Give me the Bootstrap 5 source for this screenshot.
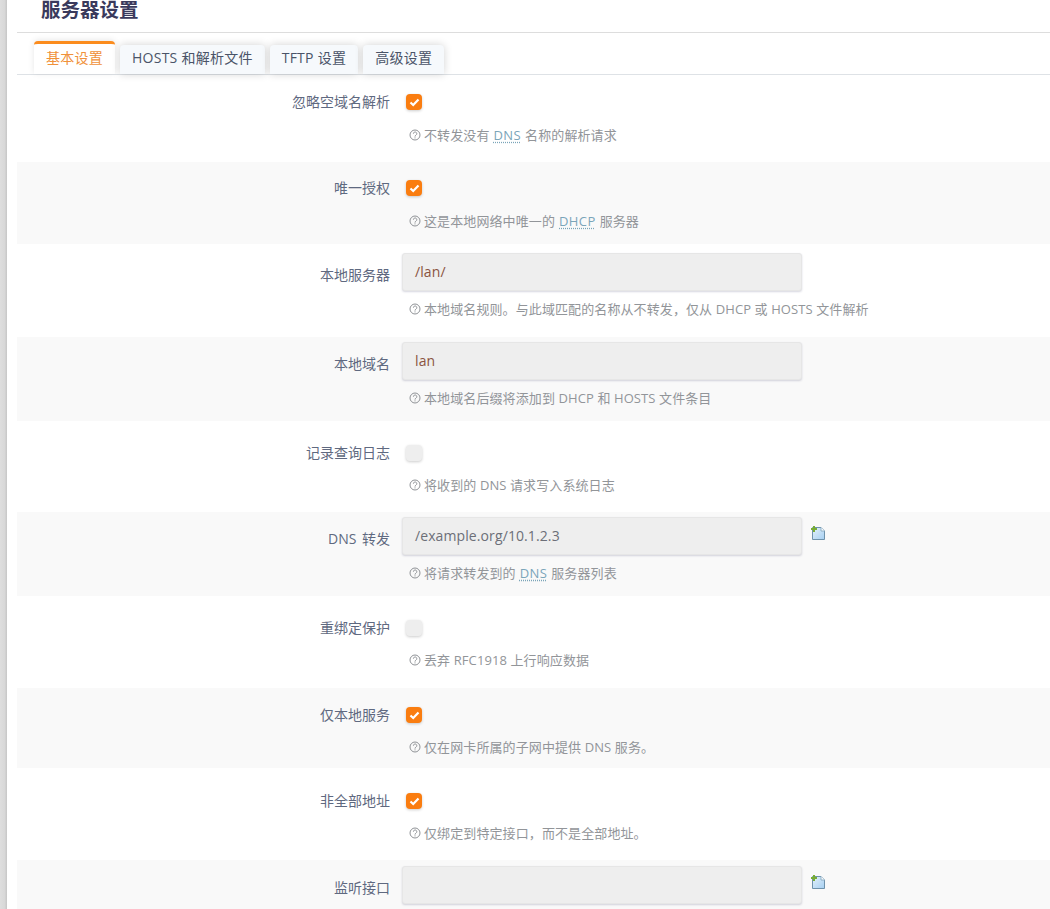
<!doctype html>
<html lang="zh"><head><meta charset="utf-8">
<link href="https://cdn.jsdelivr.net/npm/bootstrap@5.3.0/dist/css/bootstrap.min.css" rel="stylesheet">
<style>
html,body{height:909px;overflow:hidden}
body{font-family:"Open Sans","Noto Sans CJK SC",sans-serif;font-size:14px;color:#32325d;background:#fff}
.edgebar{width:7px;flex:none;background:linear-gradient(90deg,#dedede,#d8d8d8 65%,#c6c6c6)}
.mainpane{flex:1;min-width:0;padding-left:10px;height:909px;overflow:hidden}
.sec-title{font-size:19.5px;font-weight:700;line-height:18px;height:33px;margin:0;padding-left:24px;color:#3a3a5c;border-bottom:1px solid #ddd;font-family:"Noto Sans CJK SC",sans-serif}
.tabbar{height:42px;padding-left:17px;gap:5px;border-bottom:1px solid #dee2e6;align-items:flex-end}
.tabitem{height:29px;padding:0 12px;line-height:26px;font-size:14px;letter-spacing:.25px;color:#4a5468;background:#f6f9fc;border-radius:4px 4px 0 0;box-shadow:0 0 8px rgba(0,0,0,.18);white-space:nowrap}
.tabitem.on{height:33px;line-height:28px;background:#fff;color:#f0913a;border-top:3px solid #fb8c1e;box-shadow:0 -1px 6px rgba(0,0,0,.1)}
.opt.alt{background:#f9f9f9}
.optlabel{width:373px;text-align:right;flex:none;font-size:14px;line-height:16px;word-spacing:2px;color:#5f6980}
.optbody{margin-left:12px;width:400px;flex:none}
.inrow .optlabel{line-height:38px;padding-top:3px}
.cb{width:16px;height:16px;border-radius:4px;margin-left:4px;background:#eee;box-shadow:0 1px 3px rgba(0,0,0,.2);display:flex;align-items:center;justify-content:center}
.cb.checked{background:#fa7d10}
.hint{font-size:13px;letter-spacing:.1px;color:#929599;line-height:18px;white-space:nowrap;margin-left:7px;margin-top:16px;display:flex;align-items:center;gap:3px}
.hint svg{flex:none}
.inrow .hint{margin-top:9px}
.r4 .hint,.r6 .hint,.r7 .hint,.r8 .hint{margin-top:15px}
.hint abbr{color:#7ba5b9;text-decoration:underline dotted;text-underline-offset:2px;margin:0 4px;letter-spacing:.4px}
.fake-in{position:relative;width:400px;height:38px;background:#eee;border-radius:3px;box-shadow:0 1px 2px rgba(50,50,93,.2);padding:0 12px;line-height:36px;font-size:14px;letter-spacing:.1px;color:#8a5340;border:1px solid #e6e6e6}
.fake-in.gray{color:#6c6f78}
.addic{position:absolute;left:407px;top:7px;display:block}
.r0{height:87px;padding-top:19px}.r1{height:82px;padding-top:18px}.r2{height:93px;padding-top:9px}.r3{height:84px;padding-top:5px}
.r4{height:91px;padding-top:24px}.r5{height:84px;padding-top:5px}.r6{height:92px;padding-top:24px}.r7{height:80px;padding-top:19px}
.r8{height:92px;padding-top:25px}.r9{height:60px;padding-top:6px}
</style></head><body>
<svg width="0" height="0" class="position-absolute"><defs>
<symbol id="qm" viewBox="0 0 12 12"><circle cx="6" cy="6" r="5" fill="none" stroke="#8f9296"/><path d="M4.400 4.700a1.700 1.700 0 1 1 2.600 1.400c-.7.500-1 .8-1 1.500M6 8.400v1" fill="none" stroke="#8f9296"/></symbol>
<symbol id="tick" viewBox="0 0 11 9"><path d="M1.500 4.500 4.200 7 9.500 1.500" fill="none" stroke="#fff" stroke-width="2.200"/></symbol>
<linearGradient id="docfill" x1="0" y1="0" x2="1" y2="1"><stop offset="0" stop-color="#e4f1fb"/><stop offset="1" stop-color="#a6cff1"/></linearGradient>
<symbol id="addi" viewBox="0 0 16 16"><path d="M2.500 2.500h8.500l3.500 3.500v8.500h-12z" fill="url(#docfill)" stroke="#6f92ab"/><path d="M11 2.500v3.500h3.500" fill="#fff" stroke="#8fb0c6"/><path d="M4 1v6M1 4h6" stroke="#79ad36" stroke-width="2"/></symbol>
</defs></svg>
<div class="d-flex">
<div class="edgebar"></div>
<div class="mainpane">
<h3 class="sec-title">服务器设置</h3>
<div class="tabbar d-flex">
 <div class="tabitem on">基本设置</div><div class="tabitem">HOSTS 和解析文件</div><div class="tabitem">TFTP 设置</div><div class="tabitem">高级设置</div>
</div>
<div class="opt r0 d-flex"><div class="optlabel">忽略空域名解析</div><div class="optbody"><div class="cb checked"><svg width="11" height="9"><use href="#tick"/></svg></div><div class="hint"><svg width="12" height="12"><use href="#qm"/></svg><span>不转发没有<abbr>DNS</abbr>名称的解析请求</span></div></div></div>
<div class="opt alt r1 d-flex"><div class="optlabel">唯一授权</div><div class="optbody"><div class="cb checked"><svg width="11" height="9"><use href="#tick"/></svg></div><div class="hint"><svg width="12" height="12"><use href="#qm"/></svg><span>这是本地网络中唯一的<abbr>DHCP</abbr>服务器</span></div></div></div>
<div class="opt inrow r2 d-flex"><div class="optlabel">本地服务器</div><div class="optbody"><div class="fake-in">/lan/</div><div class="hint"><svg width="12" height="12"><use href="#qm"/></svg><span>本地域名规则。与此域匹配的名称从不转发，仅从 DHCP 或 HOSTS 文件解析</span></div></div></div>
<div class="opt alt inrow r3 d-flex"><div class="optlabel">本地域名</div><div class="optbody"><div class="fake-in">lan</div><div class="hint"><svg width="12" height="12"><use href="#qm"/></svg><span>本地域名后缀将添加到 DHCP 和 HOSTS 文件条目</span></div></div></div>
<div class="opt r4 d-flex"><div class="optlabel">记录查询日志</div><div class="optbody"><div class="cb"></div><div class="hint"><svg width="12" height="12"><use href="#qm"/></svg><span>将收到的 DNS 请求写入系统日志</span></div></div></div>
<div class="opt alt inrow r5 d-flex"><div class="optlabel">DNS 转发</div><div class="optbody"><div class="fake-in gray">/example.org/10.1.2.3<svg class="addic" width="16" height="16"><use href="#addi"/></svg></div><div class="hint"><svg width="12" height="12"><use href="#qm"/></svg><span>将请求转发到的<abbr>DNS</abbr>服务器列表</span></div></div></div>
<div class="opt r6 d-flex"><div class="optlabel">重绑定保护</div><div class="optbody"><div class="cb"></div><div class="hint"><svg width="12" height="12"><use href="#qm"/></svg><span>丢弃 RFC1918 上行响应数据</span></div></div></div>
<div class="opt alt r7 d-flex"><div class="optlabel">仅本地服务</div><div class="optbody"><div class="cb checked"><svg width="11" height="9"><use href="#tick"/></svg></div><div class="hint"><svg width="12" height="12"><use href="#qm"/></svg><span>仅在网卡所属的子网中提供 DNS 服务。</span></div></div></div>
<div class="opt r8 d-flex"><div class="optlabel">非全部地址</div><div class="optbody"><div class="cb checked"><svg width="11" height="9"><use href="#tick"/></svg></div><div class="hint"><svg width="12" height="12"><use href="#qm"/></svg><span>仅绑定到特定接口，而不是全部地址。</span></div></div></div>
<div class="opt alt inrow r9 d-flex"><div class="optlabel">监听接口</div><div class="optbody"><div class="fake-in gray"><svg class="addic" width="16" height="16"><use href="#addi"/></svg></div></div></div>
</div></div>
<script src="https://cdn.jsdelivr.net/npm/bootstrap@5.3.0/dist/js/bootstrap.bundle.min.js"></script>
</body></html>
